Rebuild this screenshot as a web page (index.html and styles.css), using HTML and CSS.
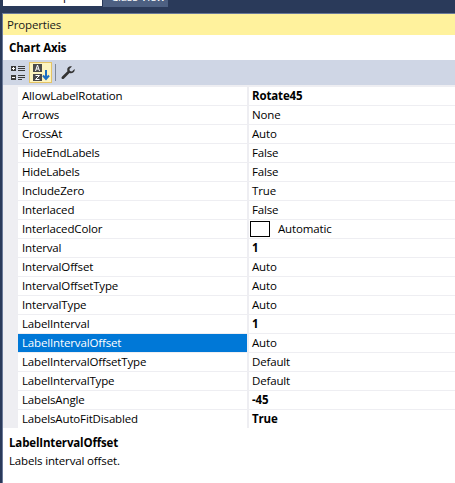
FILE: index.html
```html
<!DOCTYPE html>
<html lang="en">
<head>
    <meta charset="UTF-8">
    <meta name="viewport" content="width=device-width, initial-scale=1.0">
    <title>Properties</title>
    <link rel="stylesheet" href="styles.css">
</head>
<body>
    <div class="tabs">
        <div class="tab tab-active"><span>Solution Exp</span></div>
        <div class="tab tab-other"><span>Class View</span></div>
    </div>

    <div class="panel">
        <div class="title">Properties</div>
        <div class="object">Chart Axis</div>

        <div class="toolbar">
            <div class="tool">
                <svg width="16" height="16" viewBox="0 0 16 16" fill="none">
                    <path d="M1 1h5v5h-5zM1 10h5v5h-5z" fill="#3a3a3a"/>
                    <path d="M2 3.500h3M3.500 2v3M2 12.500h3" stroke="#fff"/>
                    <path d="M8 1.500h7M8 3.500h7M8 5.500h7M8 10.500h7M8 12.500h7M8 14.500h4" stroke="#3a3a3a"/>
                </svg>
            </div>
            <div class="tool tool-on">
                <svg width="19" height="19" viewBox="0 0 19 19" fill="none">
                    <rect x="2" y="1" width="9" height="8" fill="#4a4a4a"/>
                    <path d="M4.500 8l2-6 2 6M5.200 6h2.600" stroke="#fff"/>
                    <rect x="2" y="11" width="9" height="7" fill="#4a4a4a"/>
                    <path d="M4.500 12.500h4l-4 4h4" stroke="#fff"/>
                    <path d="M15 7v9M12 12.500l3 3.500 3-3.500" stroke="#1a6fc4" stroke-width="2"/>
                </svg>
            </div>
            <div class="sep"></div>
            <div class="tool">
                <svg width="14" height="14" viewBox="0 0 16 16" fill="none">
                    <path d="M15.500 3.500l-3 2.800-2.300-.6-.6-2.300L12.500.6C9.800-.3 7 1.500 7.100 4.300c0 .6.100 1.100.3 1.600L1.300 12c-1 1-.9 1.900-.3 2.500.6.600 1.600.7 2.500-.2l6.200-6.300c3.200 1.100 6.700-1.300 5.800-4.500z" fill="#333"/>
                </svg>
            </div>
        </div>

        <div class="grid">
            <div class="row"><div class="name">AllowLabelRotation</div><div class="value bold">Rotate45</div></div>
            <div class="row"><div class="name">Arrows</div><div class="value">None</div></div>
            <div class="row"><div class="name">CrossAt</div><div class="value">Auto</div></div>
            <div class="row"><div class="name">HideEndLabels</div><div class="value">False</div></div>
            <div class="row"><div class="name">HideLabels</div><div class="value">False</div></div>
            <div class="row"><div class="name">IncludeZero</div><div class="value">True</div></div>
            <div class="row"><div class="name">Interlaced</div><div class="value">False</div></div>
            <div class="row"><div class="name">InterlacedColor</div><div class="value"><span class="swatch"></span>Automatic</div></div>
            <div class="row"><div class="name">Interval</div><div class="value bold">1</div></div>
            <div class="row"><div class="name">IntervalOffset</div><div class="value">Auto</div></div>
            <div class="row"><div class="name">IntervalOffsetType</div><div class="value">Auto</div></div>
            <div class="row"><div class="name">IntervalType</div><div class="value">Auto</div></div>
            <div class="row"><div class="name">LabelInterval</div><div class="value bold">1</div></div>
            <div class="row selected"><div class="name">LabelIntervalOffset</div><div class="value">Auto</div></div>
            <div class="row"><div class="name">LabelIntervalOffsetType</div><div class="value">Default</div></div>
            <div class="row"><div class="name">LabelIntervalType</div><div class="value">Default</div></div>
            <div class="row"><div class="name">LabelsAngle</div><div class="value bold">-45</div></div>
            <div class="row"><div class="name">LabelsAutoFitDisabled</div><div class="value bold">True</div></div>
        </div>

        <div class="help">
            <h4>LabelIntervalOffset</h4>
            <p>Labels interval offset.</p>
        </div>
    </div>
</body>
</html>
```

FILE: styles.css
```css
body{
    margin: 0;
    height: 483px;
    overflow: hidden;
    background-color: #2a3a5a;
    font-family: "Open Sans", sans-serif;
    font-size: 11.5px;
    letter-spacing: -0.15px;
    color: #000;
}
.tabs{
    display: flex;
    height: 13px;
    padding-left: 3px;
    gap: 1px;
}
.tab{
    height: 7px;
    box-sizing: border-box;
    overflow: hidden;
    display: flex;
    align-items: flex-end;
}
.tab span{
    line-height: 14px;
    margin-bottom: 3px;
    flex: none;
}
.tab-active{
    width: 99px;
    height: 6px;
    background-color: #fff;
    justify-content: flex-end;
    padding-right: 32px;
}
.tab-other{
    width: 65px;
    padding-left: 8px;
    background-color: #4d6082;
    color: #fff;
}
.panel{
    margin-left: 3px;
    height: 470px;
    background-color: #fff;
    border-top: 1px solid #6b7a99;
    box-shadow: -1px 0 0 #6b7a99;
}
.title{
    height: 21px;
    line-height: 21px;
    padding-left: 4px;
    background-color: #fff29d;
    color: #1a1a1a;
}
.object{
    height: 25px;
    line-height: 25px;
    padding-left: 6px;
    font-weight: bold;
}
.toolbar{
    height: 25px;
    display: flex;
    align-items: center;
    padding-left: 4px;
    background-color: #cfd6e5;
}
.tool{
    width: 21px;
    height: 21px;
    display: flex;
    align-items: center;
    justify-content: center;
    box-sizing: border-box;
}
.tool-on{
    width: 23px;
    margin-left: 1px;
    background-color: #fdf4bf;
    border: 1px solid #e5c365;
}
.sep{
    width: 1px;
    height: 17px;
    margin-left: 3px;
    margin-right: 1px;
    background-color: #7f8796;
}
.grid{
    padding-left: 15px;
    padding-top: 1px;
    background-color: #eeeef2;
}
.row{
    display: grid;
    grid-template-columns: 231px 1fr;
    height: 19px;
    box-sizing: border-box;
    border-top: 1px solid #eeeef2;
    background-color: #fff;
    line-height: 17px;
}
.name{
    padding-left: 4px;
    border-right: 2px solid #eeeef2;
}
.value{
    padding-left: 3px;
    display: flex;
    align-items: flex-start;
}
.bold{
    font-weight: bold;
}
.selected .name{
    background-color: #0078d7;
    color: #fff;
}
.swatch{
    width: 20px;
    height: 16px;
    box-sizing: border-box;
    align-self: center;
    margin-left: -2px;
    margin-right: 8px;
    border: 1px solid #000;
    background-color: #fff;
}
.help{
    padding: 6px 6px;
}
.help h4{
    margin: 0;
    font-size: 11.5px;
    line-height: 18px;
}
.help p{
    margin: 0;
    line-height: 18px;
}
```
